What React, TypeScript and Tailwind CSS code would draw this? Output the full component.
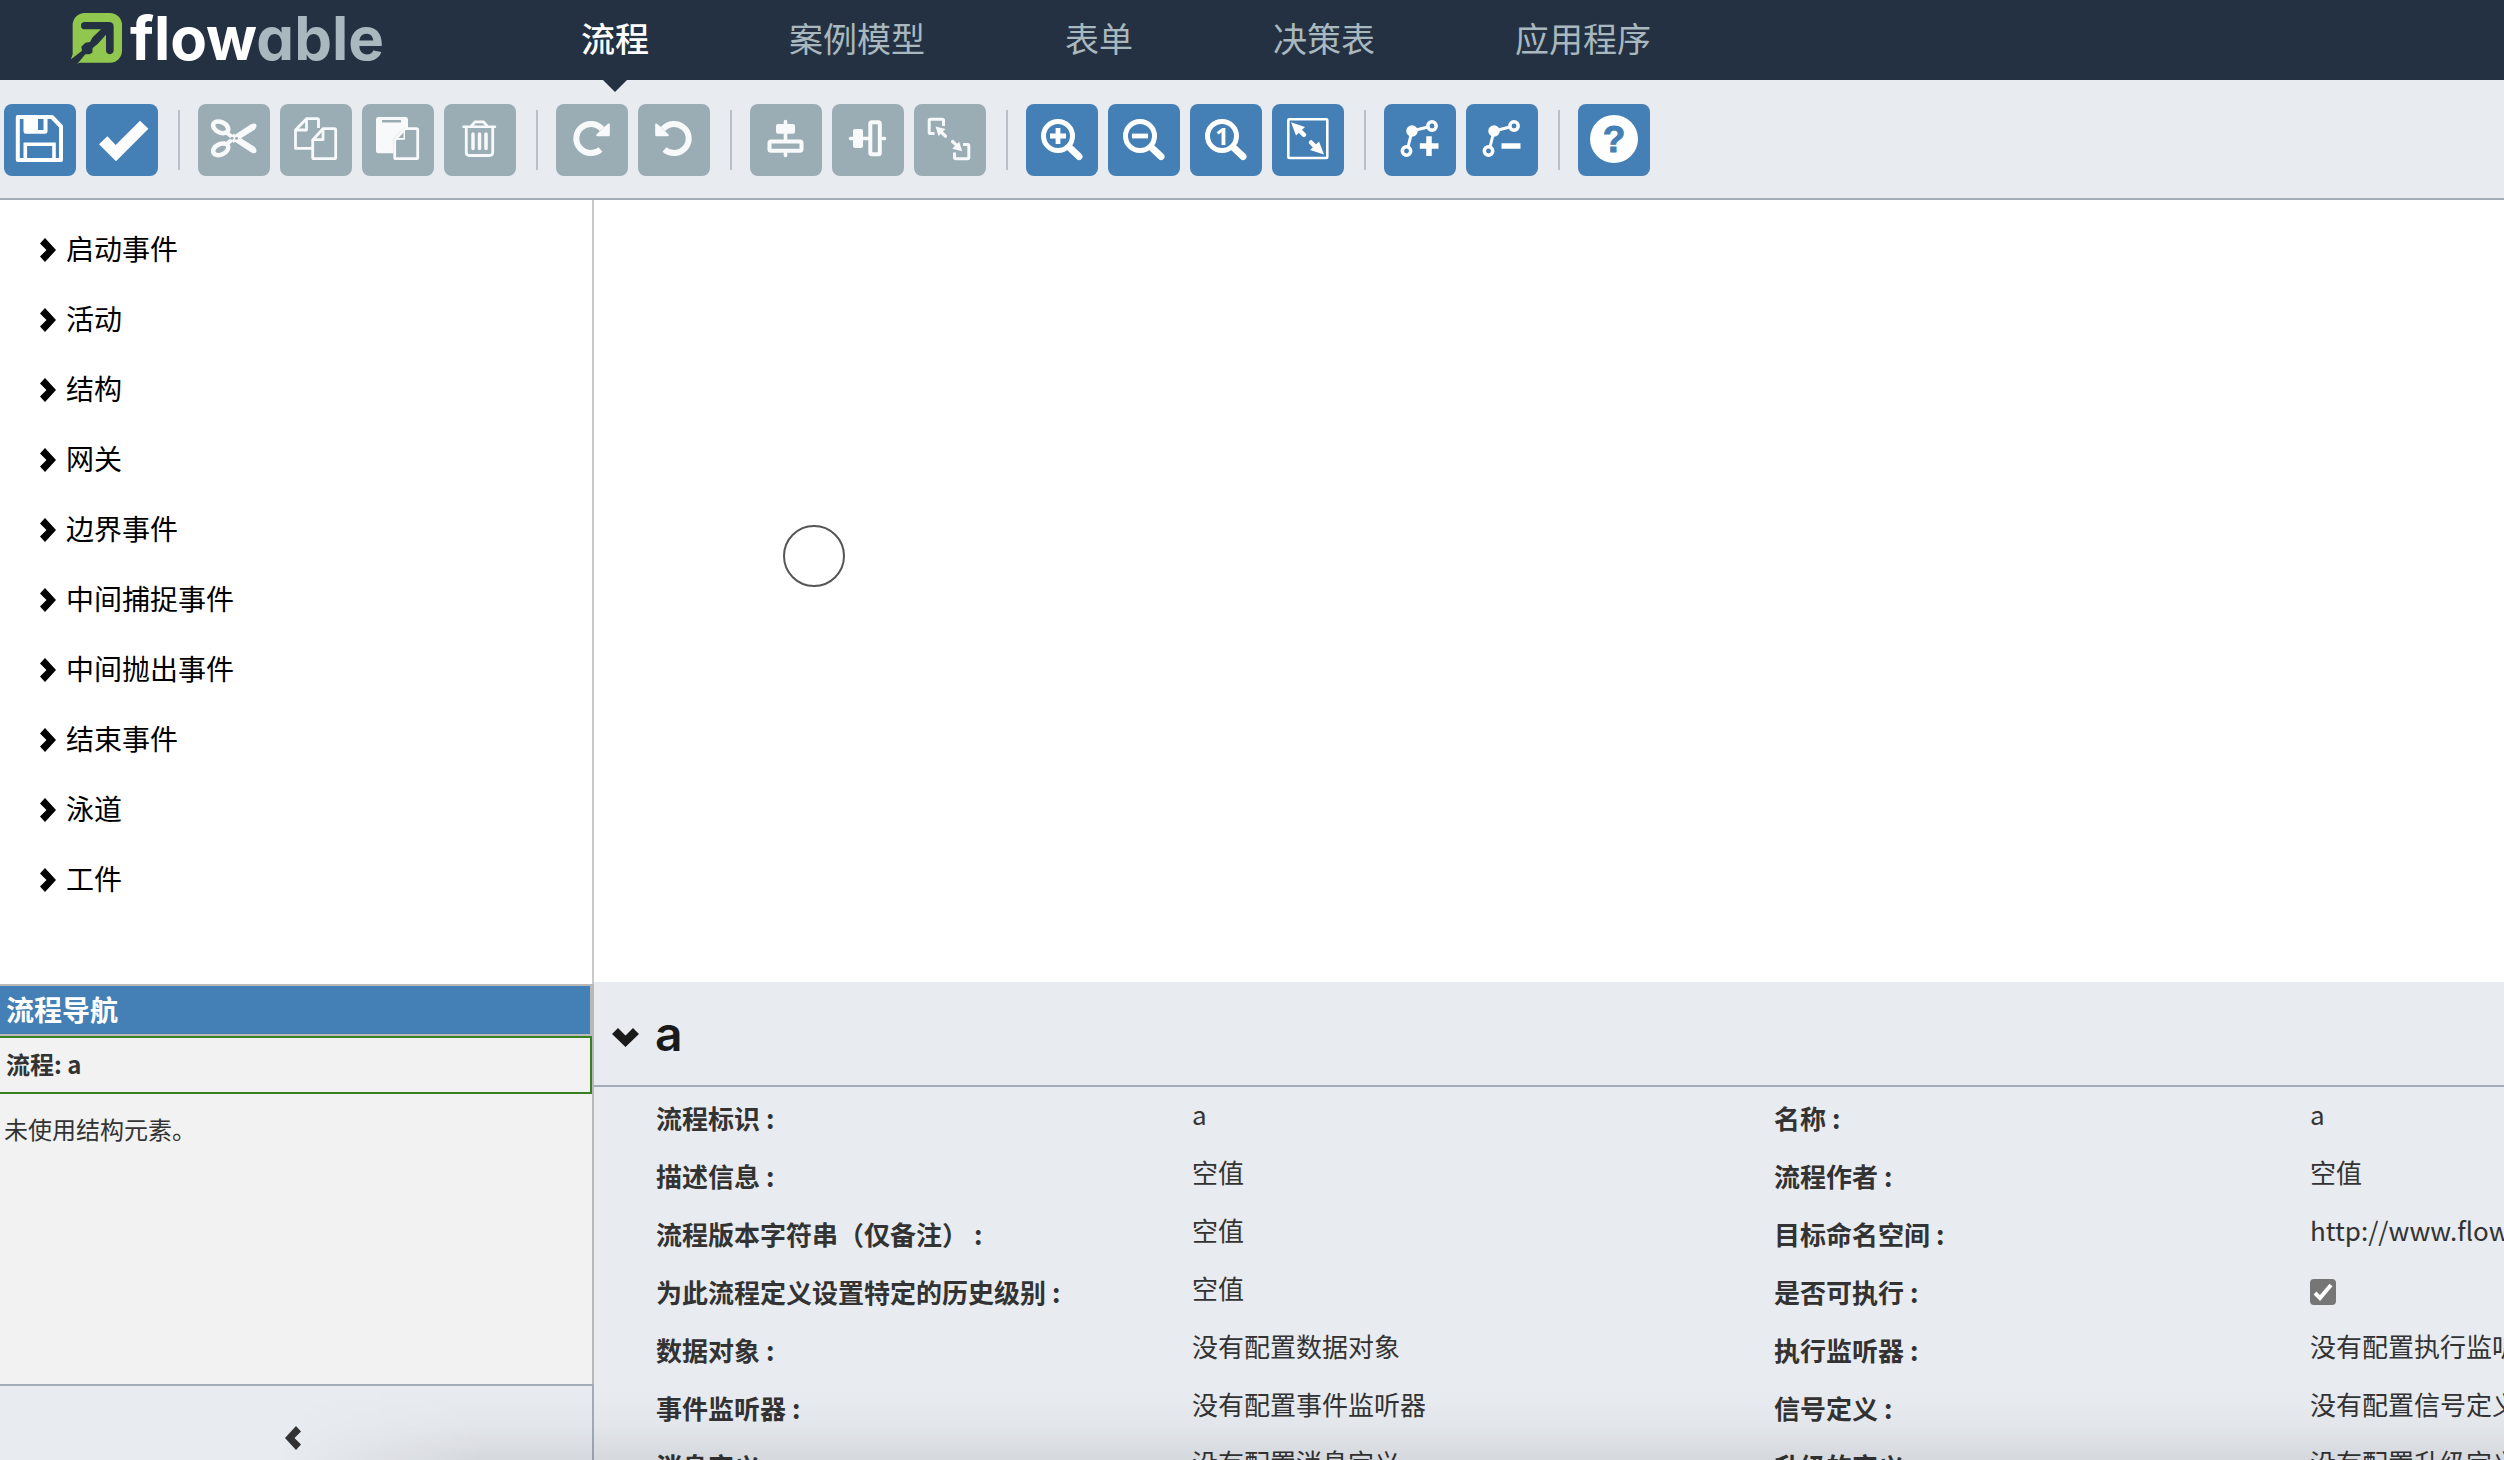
import { useState } from "react"
import type { ReactNode } from "react"

const navItems = ["流程", "案例模型", "表单", "决策表", "应用程序"]

const paletteGroups = [
  "启动事件",
  "活动",
  "结构",
  "网关",
  "边界事件",
  "中间捕捉事件",
  "中间抛出事件",
  "结束事件",
  "泳道",
  "工件",
]

const properties = [
  { title: "流程标识", value: "a" },
  { title: "名称", value: "a" },
  { title: "描述信息", value: "空值" },
  { title: "流程作者", value: "空值" },
  { title: "流程版本字符串（仅备注）", value: "空值" },
  { title: "目标命名空间", value: "http://www.flowable.org/processdef" },
  { title: "为此流程定义设置特定的历史级别", value: "空值" },
  { title: "是否可执行", value: true },
  { title: "数据对象", value: "没有配置数据对象" },
  { title: "执行监听器", value: "没有配置执行监听器" },
  { title: "事件监听器", value: "没有配置事件监听器" },
  { title: "信号定义", value: "没有配置信号定义" },
  { title: "消息定义", value: "没有配置消息定义" },
  { title: "升级的定义", value: "没有配置升级定义" },
]

type Tool = { label: string; icon: ReactNode; disabled?: boolean }

const magnifier = (
  <>
    <circle cx="32" cy="32" r="14.5" fill="none" stroke="currentColor" strokeWidth="5" />
    <path d="M43.5 43.5 53 52.5" stroke="currentColor" strokeWidth="7" strokeLinecap="round" />
  </>
)

const bendpoint = (
  <g stroke="currentColor" fill="none" strokeWidth="3.5">
    <path d="M44 23 28 27 24 43" strokeWidth="3" />
    <circle cx="28" cy="27" r="4" fill="currentColor" />
    <circle cx="48" cy="22" r="4.2" />
    <circle cx="22.5" cy="47" r="4.2" />
  </g>
)

const rotateArrow = (
  <>
    <path d="M44.5 45.5A14.6 14.6 0 1 1 46 25" fill="none" stroke="currentColor" strokeWidth="6" />
    <path d="M52.500 19.500Q53.800 19 53.800 20.500V31Q53.800 32.200 52.500 32.200H41.500Q39.500 32 40.500 30.500L44 27 48 23Z" fill="currentColor" />
  </>
)

const toolGroups: Tool[][] = [
  [
    {
      label: "保存模型",
      icon: (
        <>
          <path d="M13.800 13H48L57 22.500V56H13.800Z" fill="none" stroke="currentColor" strokeWidth="4" strokeLinejoin="round" />
          <path fillRule="evenodd" d="M19.500 12H43.500V27.500Q43.500 29.800 41 29.800H22Q19.500 29.800 19.500 27.500ZM34 15V26H39.500V15Z" fill="currentColor" />
          <path d="M21.300 56V40.300H50V56" fill="none" stroke="currentColor" strokeWidth="3.600" />
        </>
      ),
    },
    {
      label: "验证模型",
      icon: <path d="M13 40.300 21.400 32.300 29.700 41 54 16.700 62.400 24.700 30 57.300Z" fill="currentColor" />,
    },
  ],
  [
    {
      label: "剪切",
      disabled: true,
      icon: (
        <>
          <g fill="none" stroke="currentColor" strokeWidth="4.500">
            <ellipse cx="22.700" cy="23.300" rx="8" ry="5.200" transform="rotate(26 22.700 23.300)" />
            <ellipse cx="22.700" cy="45.300" rx="8" ry="5.200" transform="rotate(-26 22.700 45.300)" />
            <path d="M29 29 36 34.300 29 39.600" strokeWidth="4" />
          </g>
          <path d="M35 32 52.500 20.600Q56 18.500 58 20 59.500 23 56.500 25.800L41 35.500 35 39Z" fill="currentColor" />
          <path d="M35 36.600 52.500 48Q56 50.100 58 48.600 59.500 45.600 56.500 42.800L41 33.100 35 29.600Z" fill="currentColor" />
          <g className="fill-[#9aadb4]">
            <circle cx="34" cy="34.300" r="1.500" />
            <circle cx="38.500" cy="34.300" r="1.500" />
          </g>
        </>
      ),
    },
    {
      label: "复制",
      disabled: true,
      icon: (
        <g fill="none" stroke="currentColor" strokeWidth="2.800" strokeLinejoin="round">
          <path d="M32 44.300H15.500V26L26.500 14.700H37.500Q38.500 14.700 38.500 16V24" />
          <path d="M26.500 15V26H15.500" />
          <path d="M32.700 36 43 24.700H54.500Q55.700 24.700 55.700 26V53.500Q55.700 54.700 54.500 54.700H34Q32.700 54.700 32.700 53.500Z" />
          <path d="M43 25V35.700H33" />
        </g>
      ),
    },
    {
      label: "粘贴",
      disabled: true,
      icon: (
        <>
          <path fillRule="evenodd" d="M16.500 13H43.500Q46 13 46 15.500V24H42L31.500 35V49.300H16.500Q14 49.300 14 46.800V15.500Q14 13 16.500 13ZM20 16V18.500H39V16Z" fill="currentColor" />
          <path d="M32.700 36 43 24.700H54.500Q55.700 24.700 55.700 26V53.500Q55.700 54.700 54.500 54.700H34Q32.700 54.700 32.700 53.500Z" className="fill-[#9aadb4]" stroke="currentColor" strokeWidth="2.800" />
          <path d="M32.700 36 43 24.700V35.700Z" fill="currentColor" />
          <path d="M36.500 34 41.500 28.500V34Z" className="fill-[#9aadb4]" />
        </>
      ),
    },
    {
      label: "删除",
      disabled: true,
      icon: (
        <g fill="none" stroke="currentColor" strokeLinecap="round">
          <path d="M19.500 22.800H51" strokeWidth="2.500" />
          <path d="M27.500 22 31 17.800H39.500L43 22" strokeWidth="2.800" />
          <path d="M22.300 24V48.500Q22.300 51.500 25.500 51.500H45.500Q48.700 51.500 48.700 48.500V24" strokeWidth="2.800" />
          <path d="M29 30V44.500M35.500 30V44.500M42 30V44.500" strokeWidth="3.500" />
        </g>
      ),
    },
  ],
  [
    { label: "重做", disabled: true, icon: rotateArrow },
    { label: "撤销", disabled: true, icon: <g transform="matrix(-1 0 0 1 71 0)">{rotateArrow}</g> },
  ],
  [
    {
      label: "垂直对齐",
      disabled: true,
      icon: (
        <>
          <path d="M35.500 17.500V35M35.500 49V51.500" stroke="currentColor" strokeWidth="3.600" strokeLinecap="round" />
          <rect x="26" y="20" width="19" height="9.700" rx="2" fill="currentColor" />
          <rect x="19.500" y="37.500" width="32" height="9.200" rx="1.500" fill="none" stroke="currentColor" strokeWidth="4" />
        </>
      ),
    },
    {
      label: "水平对齐",
      disabled: true,
      icon: (
        <>
          <path d="M18.500 34.500H37M51 34.500H52.500" stroke="currentColor" strokeWidth="3.600" strokeLinecap="round" />
          <rect x="21" y="25" width="10" height="19" rx="2" fill="currentColor" />
          <rect x="38.300" y="18.300" width="9.500" height="32" rx="1.500" fill="none" stroke="currentColor" strokeWidth="4" />
        </>
      ),
    },
    {
      label: "相同大小",
      disabled: true,
      icon: (
        <>
          <g fill="none" stroke="currentColor" strokeWidth="3">
            <path d="M20.500 29.500H16.500Q15.200 29.500 15.200 28.200V16.500Q15.200 15.200 16.500 15.200H28Q29.500 15.200 29.500 16.500V22" />
            <path d="M49 40.500H53.500Q54.800 40.500 54.800 41.800V53.500Q54.800 54.800 53.500 54.800H42Q40.500 54.800 40.500 53.500V48.500" />
            <path d="M27 28 31.500 32.200M38.500 37.500 43 41.700" strokeWidth="3.200" strokeLinecap="round" />
          </g>
          <path d="M21.500 22.500 31.500 25 24.500 32ZM48.200 47.200 38.200 44.700 45.200 37.700Z" fill="currentColor" />
        </>
      ),
    },
  ],
  [
    {
      label: "放大",
      icon: (
        <>
          {magnifier}
          <path d="M24 32H40M32 24V40" stroke="currentColor" strokeWidth="4.800" />
        </>
      ),
    },
    {
      label: "缩小",
      icon: (
        <>
          {magnifier}
          <path d="M24 32H40" stroke="currentColor" strokeWidth="4.800" />
        </>
      ),
    },
    {
      label: "缩放到实际大小",
      icon: (
        <>
          {magnifier}
          <text x="32" y="40.5" textAnchor="middle" fontSize="24" className="fill-current font-['Noto_Sans'] font-bold">
            1
          </text>
        </>
      ),
    },
    {
      label: "缩放到合适大小",
      icon: (
        <>
          <rect x="16.300" y="15.300" width="39" height="38.700" rx="1" fill="none" stroke="currentColor" strokeWidth="2.600" />
          <path d="M27 26 32 30.800M39 38.500 44 43.300" stroke="currentColor" strokeWidth="4.500" strokeLinecap="round" />
          <path d="M19 18.300 33 23 24 31.500ZM52 50.500 38 46 47 37.500Z" fill="currentColor" />
        </>
      ),
    },
  ],
  [
    {
      label: "添加弯曲点",
      icon: (
        <>
          {bendpoint}
          <path d="M35.800 42H54.500M45 32.300V52" stroke="currentColor" strokeWidth="5.500" />
        </>
      ),
    },
    {
      label: "移除弯曲点",
      icon: (
        <>
          {bendpoint}
          <path d="M35.500 42H54.500" stroke="currentColor" strokeWidth="5.500" />
        </>
      ),
    },
  ],
  [
    {
      label: "帮助",
      icon: (
        <>
          <circle cx="36" cy="35" r="24" fill="currentColor" />
          <text x="36" y="48" textAnchor="middle" fontSize="37" className="fill-[#447fb5] stroke-[#447fb5] stroke-1 font-['Liberation_Sans'] font-bold">
            ?
          </text>
        </>
      ),
    },
  ],
]

function Chevron({ className }: { className: string }) {
  return (
    <svg viewBox="0 0 16 24" className={className} fill="currentColor" aria-hidden="true">
      <path d="M5 0 16 12 5 24 0 18.500 6.500 12 0 5.500Z" />
    </svg>
  )
}

function Logo() {
  return (
    <a href="#" aria-label="flowable" className="flex items-center gap-2 pl-[71px]">
      <svg viewBox="0 0 153 153" className="h-[51px] w-[51px]" aria-hidden="true">
        <path d="M41 0H117A36 36 0 0 1 153 36V113A36 36 0 0 1 117 149H26L17 153 0 138 5 124V36A36 36 0 0 1 41 0Z" className="fill-[#92c74f]" />
        <path
          d="M41 27H114Q128 27 128 41V112A11.500 11.500 0 0 1 105 112V65L80 93 65 105 64 119 55 124H43L17 155-2 140 33 113 31 101 43 89 57 87 65 73 90 49H41A11 11 0 0 1 41 27Z"
          className="fill-[#243142]"
        />
      </svg>
      <span className="font-[Inter] text-[60px] font-bold leading-[76px] text-white [font-feature-settings:'cv11']">
        flow<span className="text-[#a9b8bf]">able</span>
      </span>
    </a>
  )
}

function Toolbar() {
  return (
    <div role="toolbar" className="flex h-[120px] shrink-0 items-start overflow-hidden border-b-2 border-[#a4acb9] bg-[#e8ebf0] pl-1 pt-6">
      {toolGroups.map((group, i) => (
        <div key={i} className="flex items-center">
          {i > 0 && <div className="ml-5 mr-[18px] h-[60px] w-0.5 bg-[#b9bfc9]" />}
          <div className="flex gap-2.5">
            {group.map((tool) => (
              <button
                key={tool.label}
                type="button"
                aria-label={tool.label}
                disabled={tool.disabled}
                className="h-[72px] w-[72px] rounded-lg bg-[#447fb5] text-white disabled:bg-[#9aadb4] disabled:text-[#f8f9fb]"
              >
                <svg viewBox="0 0 72 72" className="h-full w-full" aria-hidden="true">
                  {tool.icon}
                </svg>
              </button>
            ))}
          </div>
        </div>
      ))}
    </div>
  )
}

export default function App() {
  const [executable, setExecutable] = useState(true)

  return (
    <div className="relative flex h-screen flex-col overflow-hidden bg-white font-['Noto_Sans_CJK_SC',sans-serif] text-[#333]">
      {/* Header */}
      <header className="flex h-20 shrink-0 bg-[#243142]">
        <div className="w-[511px] shrink-0 overflow-hidden">
          <Logo />
        </div>
        <nav className="flex">
          {navItems.map((item, i) => (
            <a
              key={item}
              href="#"
              className={
                i === 0
                  ? "relative px-[70px] text-[34px] font-medium leading-[76px] text-white"
                  : "px-[70px] text-[34px] leading-[76px] text-[#a9b8bf]"
              }
            >
              {item}
              {i === 0 && (
                <svg viewBox="0 0 24 12" className="absolute left-1/2 top-full h-3 w-6 -translate-x-1/2 fill-[#243142]" aria-hidden="true">
                  <path d="M0 0H24L12 12Z" />
                </svg>
              )}
            </a>
          ))}
        </nav>
      </header>

      <Toolbar />

      <div className="flex min-h-0 flex-1">
        {/* Stencil palette and process navigator */}
        <aside className="flex w-[594px] shrink-0 flex-col">
          <ul className="min-h-0 flex-1 overflow-hidden border-r-2 border-[#c9c9c9] pt-[15px]">
            {paletteGroups.map((group) => (
              <li key={group}>
                <button type="button" className="flex h-[70px] items-center gap-2.5 pl-10 text-[28px] leading-10 text-black">
                  <Chevron className="h-6 w-4" />
                  <span className="pb-1">{group}</span>
                </button>
              </li>
            ))}
          </ul>

          <section className="h-[400px] border-r-2 border-[#b9b9b9] bg-[#f2f2f2]">
            <h2 className="border-y-2 border-r-2 border-[#b9b9b9] bg-[#447fb5] pb-0.5 pl-1.5 text-[28px] font-bold leading-[46px] text-white">
              流程导航
            </h2>
            <div className="border-y-2 border-r-2 border-[#37821f] pb-0.5 pl-1.5 text-[24px] font-bold leading-[52px]">流程: a</div>
            <p className="pl-1 pt-2.5 text-[24px] leading-[50px]">未使用结构元素。</p>
          </section>

          <div className="flex h-[76px] justify-center border-r-2 border-t-2 border-[#a4acb9] bg-[#e8ebf0] pr-1.5 pt-[40px]">
            <button type="button" aria-label="收起" className="h-6 w-4">
              <Chevron className="h-6 w-4 rotate-180" />
            </button>
          </div>
        </aside>

        <main className="flex min-w-0 flex-1 flex-col">
          {/* Canvas */}
          <div className="relative min-h-0 flex-1 bg-white">
            <div className="absolute left-[189px] top-[325px] h-[62px] w-[62px] rounded-full border-2 border-[#555]" />
          </div>

          {/* Properties */}
          <section className="h-[478px] overflow-hidden bg-[#e8ebf0]">
            <h2 className="border-b-2 border-[#a4acb9] text-[#1a1a1a]">
              <button type="button" className="flex h-[103px] items-center gap-4 pl-[18px] font-[Inter] text-[48px] font-semibold leading-none">
                <svg viewBox="0 0 27 19" className="mt-2 h-[19px] w-[27px]" fill="currentColor" aria-hidden="true">
                  <path d="M0 6 6 0 13.500 7.500 21 0 27 6 13.500 19Z" />
                </svg>
                <span>a</span>
              </button>
            </h2>
            <div className="grid grid-cols-[536px_582px_536px_1fr] pl-[62px] pt-0.5 text-[26px] leading-[58px]">
              {properties.map(({ title, value }, i) => (
                <div key={title} className="contents">
                  <label htmlFor={`property-${i}`} className="h-[58px] whitespace-nowrap font-bold">
                    {title} :
                  </label>
                  {typeof value === "string" ? (
                    <output id={`property-${i}`} className="h-[58px] min-w-0 overflow-hidden whitespace-nowrap leading-[50px]">
                      {value}
                    </output>
                  ) : (
                    <div className="grid h-[58px] content-center justify-items-start">
                      <input
                        id={`property-${i}`}
                        type="checkbox"
                        checked={executable}
                        onChange={(e) => setExecutable(e.target.checked)}
                        className="peer col-start-1 row-start-1 h-[26px] w-[26px] appearance-none rounded border-2 border-[#767676] bg-white checked:bg-[#767676]"
                      />
                      <svg viewBox="0 0 26 26" className="pointer-events-none invisible col-start-1 row-start-1 h-[26px] w-[26px] peer-checked:visible" aria-hidden="true">
                        <path d="M5 14 10 19 21 6" fill="none" stroke="#fff" strokeWidth="4" />
                      </svg>
                    </div>
                  )}
                </div>
              ))}
            </div>
          </section>
        </main>
      </div>

      {/* Soft shade along the bottom edge */}
      <div className="pointer-events-none absolute bottom-0 left-[280px] right-0 h-[72px] bg-linear-to-t from-black/8 via-black/2 to-transparent [mask-image:linear-gradient(to_right,transparent,black_200px)]" />
    </div>
  )
}
